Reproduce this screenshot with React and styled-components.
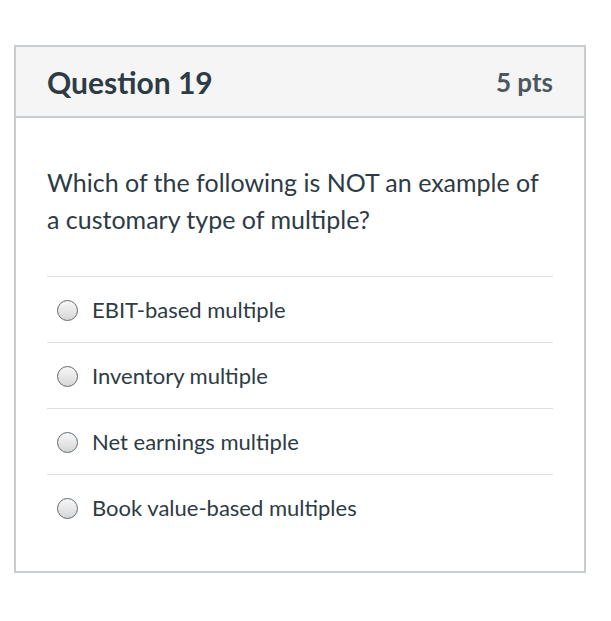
import React from 'react'
import styled, { createGlobalStyle } from 'styled-components'

const GlobalStyle = createGlobalStyle`
  body {
    margin: 0;
    background: #fff;
    font-family: Lato, "Open Sans", sans-serif;
    color: #2d3b45;
  }
`

const Page = styled.div`
  padding: 45px 0 0 14px;
`

const Card = styled.section`
  width: 568px;
  border: 2px solid #c7cdd1;
  background: #fff
`

const Header = styled.header`
  display: flex;
  align-items: center;
  justify-content: space-between;
  height: 69px;
  padding: 0 31px 0 31px;
  background: #f5f5f5;
  border-bottom: 2px solid #c7cdd1
`

const Title = styled.h2`
  margin: 0;
  font-size: 30px;
  font-weight: 700
`

const Points = styled.span`
  font-size: 26px;
  font-weight: 700;
  color: #4c5860
`

const Body = styled.div`
  padding: 46px 31px 31px 31px
`

const Prompt = styled.p`
  margin: 0 0 38px;
  font-size: 25px;
  line-height: 37px
`

const Answers = styled.ul`
  list-style: none;
  margin: 0;
  padding: 0
`

const Answer = styled.li`
  display: flex;
  align-items: center;
  height: 65px;
  border-top: 1px solid #dde1e3;
  font-size: 22px
`

const Radio = styled.span`
  box-sizing: border-box;
  width: 21px;
  height: 21px;
  margin: 2px 14px 0 10px;
  border-radius: 50%;
  border: 1.5px solid #5f6b73;
  background: linear-gradient(#f8f8f8, #d6d6d6)
`

const answers = [
  'EBIT-based multiple',
  'Inventory multiple',
  'Net earnings multiple',
  'Book value-based multiples',
]

export default function App() {
  return (
    <Page>
      <GlobalStyle />
      <Card>
        <Header>
          <Title>Question 19</Title>
          <Points>5 pts</Points>
        </Header>
        <Body>
          <Prompt>
            Which of the following is NOT an example of a customary type of multiple?
          </Prompt>
          <Answers>
            {answers.map(a => (
              <Answer key={a}>
                <Radio />
                {a}
              </Answer>
            ))}
          </Answers>
        </Body>
      </Card>
    </Page>
  )
}
